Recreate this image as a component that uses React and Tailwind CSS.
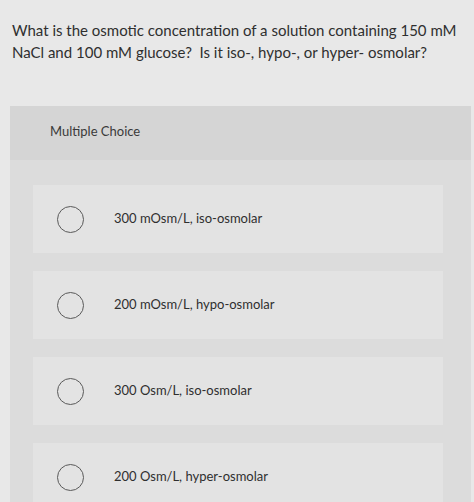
export default function App() {
  const options = [
    "300 mOsm/L, iso-osmolar",
    "200 mOsm/L, hypo-osmolar",
    "300 Osm/L, iso-osmolar",
    "200 Osm/L, hyper-osmolar",
  ];
  return (
    <div className="w-[474px] h-[502px] overflow-hidden bg-[#e8e8e8] text-[#2f2f2f]" style={{ fontFamily: "Lato, 'Open Sans', sans-serif" }}>
      <div className="pl-[12px] pt-[19px] h-[106px] text-[15px] leading-[22px] whitespace-nowrap">
        <div>What is the osmotic concentration of a solution containing 150 mM</div>
        <div>NaCl and 100 mM glucose?&nbsp; Is it iso-, hypo-, or hyper- osmolar?</div>
      </div>
      <div className="ml-[10px] mr-[3px] bg-[#dcdcdc] h-[396px]">
        <div className="h-[54px] bg-[#d5d5d5] pl-[40px] pt-[16px] text-[13px] leading-[18px] text-[#3a3a3a]">
          Multiple Choice
        </div>
        <div className="flex flex-col gap-[18px] pl-[23px] pr-[28px] pt-[25px]">
          {options.map((o) => (
            <div key={o} className="h-[68px] bg-[#e3e3e3] flex items-center">
              <div className="ml-[24px] w-[27px] h-[27px] rounded-full border-[1.5px] border-[#5a5a5a] shrink-0" />
              <div className="ml-[30px] text-[13px] text-[#2f2f2f]">{o}</div>
            </div>
          ))}
        </div>
      </div>
    </div>
  );
}
